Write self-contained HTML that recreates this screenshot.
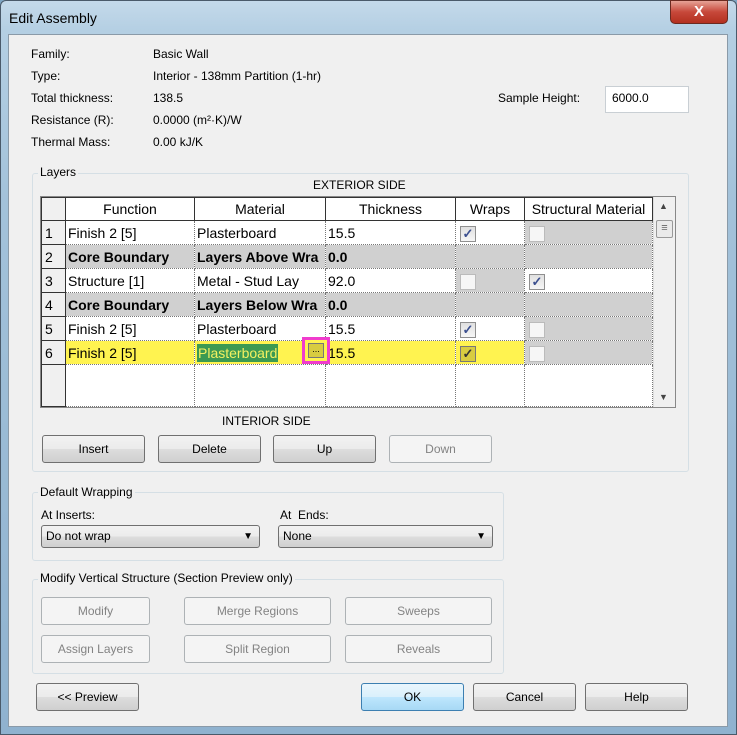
<!DOCTYPE html>
<html><head><meta charset="utf-8"><style>
*{box-sizing:border-box;margin:0;padding:0}
body{width:737px;height:735px;overflow:hidden;background:#7fa6c4;font-family:"Liberation Sans",sans-serif;font-size:12px;color:#000;position:relative}
.a{position:absolute}
.frame{left:0;top:0;width:737px;height:735px;background:linear-gradient(180deg,#c4d9ea 0,#b4cfe3 30px,#a3c2da 200px,#8fb2cf 735px);border:1px solid #4a5a6a;border-radius:6px 6px 0 0}
.client{left:8px;top:34px;width:720px;height:693px;background:#f0f0f0;border:1px solid #8a9aa8}
.t{position:absolute;white-space:nowrap}
.grp{position:absolute;border:1px solid #d5dfe5;border-radius:3px}
.grpl{position:absolute;background:#f0f0f0;padding:0 2px;white-space:nowrap}
.btn{position:absolute;height:28px;border:1px solid #707070;border-radius:3px;background:linear-gradient(#f2f2f2 0,#ebebeb 50%,#dddddd 51%,#cfcfcf 100%);text-align:center;line-height:26px;font-size:12px}
.dis{border-color:#adb2b5;background:#f4f4f4;color:#838383}
table{border-collapse:collapse;position:absolute;left:41px;top:197px;font-size:14px;table-layout:fixed}
td{height:24px;border:1px dotted #777;padding:0 2px;white-space:nowrap;overflow:hidden;line-height:20px}
th{height:23px;font-weight:normal;border:1px solid #333;background:#fff;font-size:14px;line-height:20px}
td.n{background:#f0f0f0;border:1px solid #333;padding-left:3px}
.g{background:#d0d0d0}
.b{font-weight:bold}
.y{background:#fff350}
.cb{display:inline-block;width:16px;height:16px;border:1px solid #8f8f8f;background:linear-gradient(#e0e0e0,#f6f6f6);vertical-align:middle;margin-left:2px;position:relative;font-size:13px;line-height:14px;text-align:center;color:#3b4f8f;font-weight:bold}
.cbd{border-color:#bbb;background:#f6f6f6}
</style></head><body>
<div class="a frame"></div>
<div class="t" style="left:9px;top:10px;font-size:14px;color:#000">Edit Assembly</div>
<div class="a" style="left:670px;top:0;width:58px;height:24px;border:1px solid #6b2a20;border-radius:0 0 5px 5px;background:linear-gradient(#e6a396,#c7483a 50%,#b3301f);color:#fff;font-weight:bold;font-size:15px;text-align:center;line-height:22px">X</div>
<div class="a client"></div>

<div class="t" style="left:31px;top:47px">Family:</div><div class="t" style="left:153px;top:47px">Basic Wall</div>
<div class="t" style="left:31px;top:69px">Type:</div><div class="t" style="left:153px;top:69px">Interior - 138mm Partition (1-hr)</div>
<div class="t" style="left:31px;top:91px">Total thickness:</div><div class="t" style="left:153px;top:91px">138.5</div>
<div class="t" style="left:31px;top:113px">Resistance (R):</div><div class="t" style="left:153px;top:113px">0.0000 (m²·K)/W</div>
<div class="t" style="left:31px;top:135px">Thermal Mass:</div><div class="t" style="left:153px;top:135px">0.00 kJ/K</div>
<div class="t" style="left:498px;top:91px">Sample Height:</div>
<div class="a" style="left:605px;top:86px;width:84px;height:27px;background:#fff;border:1px solid #c9cfd4;padding:4px 6px">6000.0</div>

<div class="grp" style="left:32px;top:173px;width:657px;height:299px"></div>
<div class="grpl" style="left:38px;top:165px">Layers</div>
<div class="t" style="left:313px;top:178px">EXTERIOR SIDE</div>
<div class="a" style="left:40px;top:196px;width:636px;height:212px;border:1px solid #888;background:#fff"></div>
<table>
<colgroup><col style="width:24px"><col style="width:129px"><col style="width:131px"><col style="width:130px"><col style="width:69px"><col style="width:128px"></colgroup>
<tr><th style="background:#f0f0f0"></th><th>Function</th><th>Material</th><th>Thickness</th><th>Wraps</th><th>Structural Material</th></tr>
<tr><td class="n">1</td><td>Finish 2 [5]</td><td>Plasterboard</td><td>15.5</td><td><span class="cb">✓</span></td><td class="g"><span class="cb cbd"></span></td></tr>
<tr><td class="n">2</td><td class="g b">Core Boundary</td><td class="g b">Layers Above Wra</td><td class="g b">0.0</td><td class="g"></td><td class="g"></td></tr>
<tr><td class="n">3</td><td>Structure [1]</td><td>Metal - Stud Lay</td><td>92.0</td><td class="g"><span class="cb cbd"></span></td><td><span class="cb">✓</span></td></tr>
<tr><td class="n">4</td><td class="g b">Core Boundary</td><td class="g b">Layers Below Wra</td><td class="g b">0.0</td><td class="g"></td><td class="g"></td></tr>
<tr><td class="n">5</td><td>Finish 2 [5]</td><td>Plasterboard</td><td>15.5</td><td><span class="cb">✓</span></td><td class="g"><span class="cb cbd"></span></td></tr>
<tr><td class="n">6</td><td class="y">Finish 2 [5]</td><td class="y" style="position:relative"><span style="background:#3c9a52;color:#f4f060;padding:1px 1px">Plasterboard</span></td><td class="y">15.5</td><td class="y"><span class="cb" style="background:#d8cc40;border-color:#777;color:#333">✓</span></td><td class="g"><span class="cb cbd"></span></td></tr>
<tr><td class="n" style="height:42px"></td><td></td><td></td><td></td><td></td><td></td></tr>
</table>
<div class="a" style="left:302px;top:337px;width:28px;height:27px;border:3px solid #f03ccd;background:#fff350"><div style="margin:3px auto;width:16px;height:15px;border:1px solid #777;background:#d8cc40;font-size:9px;text-align:center;line-height:10px">...</div></div>
<div class="a" style="left:653px;top:197px;width:22px;height:210px;background:#f0f0f0;border-left:1px solid #ddd"></div>
<div class="t" style="left:659px;top:201px;font-size:9px;color:#444">▲</div>
<div class="a" style="left:656px;top:220px;width:17px;height:18px;border:1px solid #999;border-radius:2px;background:#eaeaea;text-align:center;font-size:11px;line-height:15px;color:#666">≡</div>
<div class="t" style="left:659px;top:392px;font-size:9px;color:#444">▼</div>
<div class="t" style="left:222px;top:414px">INTERIOR SIDE</div>
<div class="btn" style="left:42px;top:435px;width:103px">Insert</div>
<div class="btn" style="left:158px;top:435px;width:103px">Delete</div>
<div class="btn" style="left:273px;top:435px;width:103px">Up</div>
<div class="btn dis" style="left:389px;top:435px;width:103px">Down</div>

<div class="grp" style="left:32px;top:492px;width:472px;height:69px"></div>
<div class="grpl" style="left:38px;top:485px">Default Wrapping</div>
<div class="t" style="left:41px;top:508px">At Inserts:</div>
<div class="t" style="left:280px;top:508px">At &nbsp;Ends:</div>
<div class="btn" style="left:41px;top:525px;width:219px;height:23px;text-align:left;padding-left:4px;line-height:21px">Do not wrap<span style="position:absolute;right:6px;font-size:10px">▼</span></div>
<div class="btn" style="left:278px;top:525px;width:215px;height:23px;text-align:left;padding-left:4px;line-height:21px">None<span style="position:absolute;right:6px;font-size:10px">▼</span></div>

<div class="grp" style="left:32px;top:579px;width:472px;height:95px"></div>
<div class="grpl" style="left:38px;top:571px">Modify Vertical Structure (Section Preview only)</div>
<div class="btn dis" style="left:41px;top:597px;width:109px">Modify</div>
<div class="btn dis" style="left:184px;top:597px;width:147px">Merge Regions</div>
<div class="btn dis" style="left:345px;top:597px;width:147px">Sweeps</div>
<div class="btn dis" style="left:41px;top:635px;width:109px">Assign Layers</div>
<div class="btn dis" style="left:184px;top:635px;width:147px">Split Region</div>
<div class="btn dis" style="left:345px;top:635px;width:147px">Reveals</div>

<div class="btn" style="left:36px;top:683px;width:103px">&lt;&lt; Preview</div>
<div class="btn" style="left:361px;top:683px;width:103px;border-color:#3c7fb1;background:linear-gradient(#eaf6fd,#d9f0fc 50%,#bee6fd 51%,#a7d9f5)">OK</div>
<div class="btn" style="left:473px;top:683px;width:103px">Cancel</div>
<div class="btn" style="left:585px;top:683px;width:103px">Help</div>
</body></html>
